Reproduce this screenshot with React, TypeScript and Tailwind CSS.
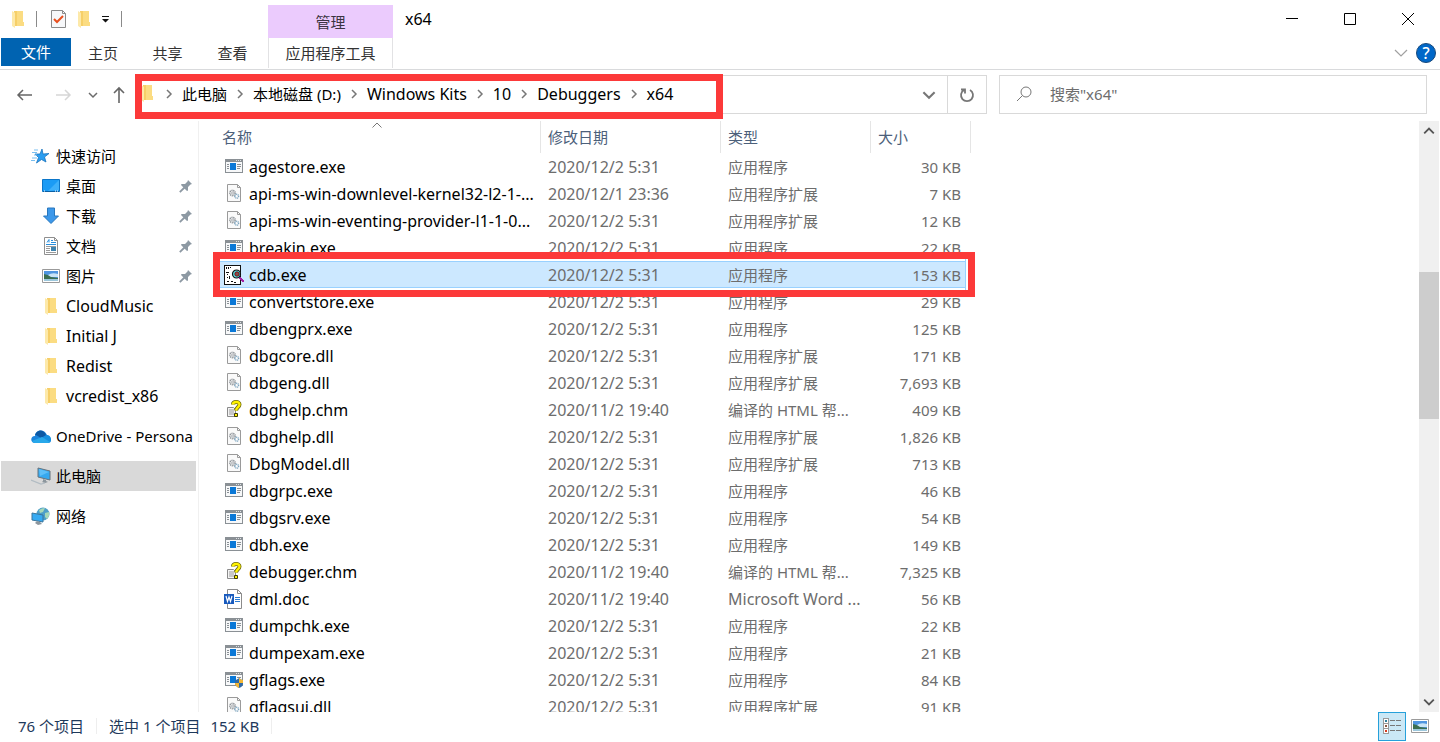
import type { ReactNode } from "react";

type FileKind = "exe" | "dll" | "chm" | "doc" | "cdb" | "shield";
type FileRow = { name: string; date: string; type: string; size: string; kind: FileKind };

const EXE = "应用程序";
const DLL = "应用程序扩展";
const CHM = "编译的 HTML 帮...";
const D2 = "2020/12/2 5:31";
const NOV = "2020/11/2 19:40";

const files: FileRow[] = [
  { name: "agestore.exe", date: D2, type: EXE, size: "30 KB", kind: "exe" },
  { name: "api-ms-win-downlevel-kernel32-l2-1-...", date: "2020/12/1 23:36", type: DLL, size: "7 KB", kind: "dll" },
  { name: "api-ms-win-eventing-provider-l1-1-0...", date: D2, type: DLL, size: "12 KB", kind: "dll" },
  { name: "breakin.exe", date: D2, type: EXE, size: "22 KB", kind: "exe" },
  { name: "cdb.exe", date: D2, type: EXE, size: "153 KB", kind: "cdb" },
  { name: "convertstore.exe", date: D2, type: EXE, size: "29 KB", kind: "exe" },
  { name: "dbengprx.exe", date: D2, type: EXE, size: "125 KB", kind: "exe" },
  { name: "dbgcore.dll", date: D2, type: DLL, size: "171 KB", kind: "dll" },
  { name: "dbgeng.dll", date: D2, type: DLL, size: "7,693 KB", kind: "dll" },
  { name: "dbghelp.chm", date: NOV, type: CHM, size: "409 KB", kind: "chm" },
  { name: "dbghelp.dll", date: D2, type: DLL, size: "1,826 KB", kind: "dll" },
  { name: "DbgModel.dll", date: D2, type: DLL, size: "713 KB", kind: "dll" },
  { name: "dbgrpc.exe", date: D2, type: EXE, size: "46 KB", kind: "exe" },
  { name: "dbgsrv.exe", date: D2, type: EXE, size: "54 KB", kind: "exe" },
  { name: "dbh.exe", date: D2, type: EXE, size: "149 KB", kind: "exe" },
  { name: "debugger.chm", date: NOV, type: CHM, size: "7,325 KB", kind: "chm" },
  { name: "dml.doc", date: NOV, type: "Microsoft Word ...", size: "56 KB", kind: "doc" },
  { name: "dumpchk.exe", date: D2, type: EXE, size: "22 KB", kind: "exe" },
  { name: "dumpexam.exe", date: D2, type: EXE, size: "21 KB", kind: "exe" },
  { name: "gflags.exe", date: D2, type: EXE, size: "84 KB", kind: "shield" },
  { name: "gflagsui.dll", date: D2, type: DLL, size: "91 KB", kind: "dll" },
];

function Folder() {
  return (
    <svg width="12" height="17" viewBox="0 0 12 17" aria-hidden="true">
      <path d="M2 0h9v11h1v4H3z" fill="#f6cf68" />
      <path d="M5 0h6v11h1v4H5z" fill="#fbdc82" />
      <path d="M0 0l3 2v15l-3-2z" fill="#fde9a9" />
    </svg>
  );
}

function ExeIcon({ shield = false }: { shield?: boolean }) {
  return (
    <svg width="20" height="20" viewBox="0 1 20 20" shapeRendering="crispEdges" aria-hidden="true">
      <path d="M1 3h18v14H1z" fill="#8a9095" />
      <path d="M2 6h16v10H2z" fill="#f7f8f9" />
      <path d="M12 4h1v1h-1zM14 4h1v1h-1zM16 4h1v1h-1z" fill="#dfe2e4" />
      <path d="M6 7h6v7H6z" fill="#0a78d7" />
      <path d="M3 8h2v1H3zM3 10h2v1H3zM3 12h2v1H3zM13 8h4v1h-4zM13 10h4v1h-4zM13 12h3v1h-3z" fill="#8a9095" />
      {shield && (
        <g shapeRendering="auto">
          <path d="M11 11q3 0 4-2 2 2 4 2v3q0 4-4 5-4-2-4-5z" fill="#2f6aa8" />
          <path d="M15 9q2 2 4 2v3h-4zM11 14h4v5q-4-2-4-5z" fill="#f3b735" />
        </g>
      )}
    </svg>
  );
}

function DllIcon() {
  return (
    <svg width="20" height="20" viewBox="0 0 20 20" fill="none" aria-hidden="true">
      <path d="M3.500.5h10l3 3v14h-13z" fill="#fafafa" stroke="#9a9a9a" />
      <path d="M13.500.5v3h3" stroke="#9a9a9a" />
      <circle cx="8.500" cy="9" r="2.600" stroke="#8e9499" strokeWidth="1.600" strokeDasharray="1.200 .6" />
      <circle cx="8.500" cy="9" r="1" stroke="#8e9499" strokeWidth=".7" />
      <circle cx="12.700" cy="12.200" r="1.900" stroke="#7fa6c0" strokeWidth="1.400" strokeDasharray="1 .5" />
    </svg>
  );
}

function ChmIcon() {
  return (
    <svg width="20" height="20" viewBox="0 0 20 20" aria-hidden="true">
      <path d="M3.500 7.500h6l2 2v7h-8z" fill="#f4f4f4" stroke="#8a8a8a" />
      <path d="M5 10h5M5 12h5M5 14h5" stroke="#9a9a9a" />
      <path d="M9 4.500c0-3 6.500-3.500 6.500 0 0 2.500-3 2.500-3.500 6" fill="none" stroke="#6e6a12" strokeWidth="4" />
      <path d="M9 4.500c0-3 6.500-3.500 6.500 0 0 2.500-3 2.500-3.500 6" fill="none" stroke="#fff200" strokeWidth="2.400" />
      <path d="M10.500 13.500h3v3h-3z" fill="#fff200" stroke="#3d3a08" />
    </svg>
  );
}

function DocIcon() {
  return (
    <svg width="20" height="20" viewBox="0 0 20 20" fill="none" aria-hidden="true">
      <path d="M3.500 5V.5h10l4 4v15h-14V15" fill="#fff" stroke="#8b8b8b" />
      <path d="M13.500.5v4h4" stroke="#8b8b8b" />
      <path d="M11 8.500h5M11 10.500h5M11 12.500h5" stroke="#2b7cd3" />
      <path d="M0 5h10v10H0z" fill="#185abd" />
      <path d="M2 7l1.500 5.500L5 8l1.500 4.500L8 7" stroke="#fff" strokeWidth="1.200" />
    </svg>
  );
}

function CdbIcon() {
  return (
    <svg width="20" height="20" viewBox="0 0 20 20" aria-hidden="true">
      <g shapeRendering="crispEdges">
        <path d="M0 0h17v20H0z" fill="#111" />
        <path d="M1 1h15v18H1z" fill="#fff" />
        <path d="M2 2h1v2H2zM4 2h1v2H4zM6 2h1v1H6zM2 7h3v1H2zM3 9h1v1H3zM3 12h1v1H3zM5 11h1v3H5zM3 16h2v1H3zM7 16h2v1H7zM10 17h2v1h-2z" fill="#111" />
        <path d="M15 12h2v1h1v1h1v1h1v2h-2v-1h-1v-1h-1v-1h-1z" fill="#a520a5" />
      </g>
      <circle cx="12.500" cy="9" r="4" fill="#63d7dc" stroke="#111" strokeWidth="1.200" />
      <circle cx="13" cy="9" r="2.200" fill="#e32b2b" stroke="#222" strokeWidth=".8" />
      <path d="M12.500 8h1v2h-1z" fill="#1b7c74" />
    </svg>
  );
}

function FileIcon({ kind }: { kind: FileKind }) {
  if (kind === "exe") return <ExeIcon />;
  if (kind === "shield") return <ExeIcon shield />;
  if (kind === "dll") return <DllIcon />;
  if (kind === "chm") return <ChmIcon />;
  if (kind === "doc") return <DocIcon />;
  return <CdbIcon />;
}

function Landscape() {
  return (
    <svg width="18" height="14" viewBox="0 0 18 14" aria-hidden="true">
      <path d="M.5.5h17v13H.5z" fill="#fff" stroke="#9a9a9a" />
      <path d="M2 2h14v10H2z" fill="#4f95e0" />
      <path d="M6 6q4-3 10-1v3H6z" fill="#c9e4f7" />
      <path d="M2 5q5 1 7 3l7 1v1H2z" fill="#3c6e50" />
      <path d="M2 10h14v2H2z" fill="#9cc7dc" />
    </svg>
  );
}

function StarIcon() {
  return (
    <svg width="20" height="18" viewBox="0 0 20 18" aria-hidden="true">
      <path d="M11 2l1 5 6-.5-4.500 3.500 1.500 5-4.500-2.500L5.500 16l2-5.500L4 7l5 0z" fill="#2a9df0" stroke="#1a74bd" strokeWidth=".8" />
      <path d="M3 3h4M1 5.500h5M3 8h3M1 11h5M0 13.500h4" stroke="#78bff0" />
    </svg>
  );
}

function DesktopIcon() {
  return (
    <svg width="18" height="14" viewBox="0 0 18 14" aria-hidden="true">
      <path d="M.5.5h17v12H.5z" fill="#1b9bf5" stroke="#0b76c9" />
      <path d="M17 1v10L6 12z" fill="#3eb0fa" />
      <path d="M1 12.500h16" stroke="#0960a5" />
      <path d="M2 12h1M13 12h1M15 12h1" stroke="#fff" />
    </svg>
  );
}

function DownloadIcon() {
  return (
    <svg width="18" height="18" viewBox="0 0 18 18" aria-hidden="true">
      <path d="M5.500 1h7v8h4L9 16.500 1.500 9h4z" fill="#3c98ea" stroke="#2877bd" />
    </svg>
  );
}

function DocumentsIcon() {
  return (
    <svg width="16" height="18" viewBox="0 0 16 18" fill="none" aria-hidden="true">
      <path d="M1.500.5h10l3 3v14h-13z" fill="#fff" stroke="#8f8f8f" />
      <path d="M11.500.5v3h3" stroke="#8f8f8f" />
      <path d="M4 5.500l2-3v3M8 3.500h2M3 7.500h10M8 5.500h5" stroke="#2a8fdd" />
      <path d="M3 9.500h10M3 11.500h4M3 13.500h4M3 15.500h10" stroke="#9a9a9a" />
      <path d="M8 10h5v4H8z" fill="#3f83ae" />
    </svg>
  );
}

function OneDriveIcon() {
  return (
    <svg width="20" height="13" viewBox="0 0 20 13" aria-hidden="true">
      <path d="M4 6c0-6 9-8 12-1 3 1 4 3 4 5s-1 3-3 3H4c-5 0-5-7 0-7z" fill="#1b84dc" />
      <path d="M4 5C6-1 13-1 15 5l-5 3-5-3z" fill="#0c59a4" />
      <path d="M11 8l5-3c3 0 4 3 4 5l-1 2z" fill="#1490df" />
      <path d="M1 11l10-4 8 5q-1 1-2 1H4q-2 0-3-2z" fill="#28a8ea" />
    </svg>
  );
}

function PcIcon() {
  return (
    <svg width="20" height="18" viewBox="0 0 20 18" aria-hidden="true">
      <path d="M7 1l12 3v9L7 10z" fill="#35a8ef" stroke="#66737d" />
      <path d="M8 2l10 3-9 4z" fill="#5dbff8" />
      <path d="M12 12l3 1v1l2 1-3 1-3-1 1-1z" fill="#8c969d" />
      <path d="M0 13l10 4 4-1" fill="none" stroke="#b2bcc3" strokeWidth="1.200" />
    </svg>
  );
}

function NetworkIcon() {
  return (
    <svg width="20" height="18" viewBox="0 0 20 18" aria-hidden="true">
      <circle cx="12" cy="7" r="6.500" fill="#4d9fc9" />
      <path d="M8 3q3-2 6-2l-2 4-3 1zM14 6l4-1q1 4-2 7l-2-2z" fill="#a7d8b8" />
      <path d="M1 6l11 2v7L1 13z" fill="#36aaf2" stroke="#39759c" />
      <path d="M6 14l3 1 2 2-4 1-3-2z" fill="#8c969d" />
    </svg>
  );
}

function Pin() {
  return (
    <svg width="13" height="13" viewBox="0 0 13 13" aria-hidden="true">
      <path d="M9 0l4 4-1.500.5L9 7l0 3.500-1 .5-6-6 .5-1L6 4l2.500-2.500z" fill="#8d99a3" />
      <path d="M5.500 7.500L.8 12.200" stroke="#8d99a3" strokeWidth="1.800" />
    </svg>
  );
}

function Chevron({ dir, size = 10, className = "" }: { dir: "up" | "down" | "right"; size?: number; className?: string }) {
  const d = dir === "up" ? "M1 7l4-4 4 4" : dir === "down" ? "M1 3l4 4 4-4" : "M3 1l4 4-4 4";
  return (
    <svg width={size} height={size} viewBox="0 0 10 10" fill="none" stroke="currentColor" className={className} aria-hidden="true">
      <path d={d} strokeWidth="1.500" />
    </svg>
  );
}

function NavItem({ icon, label, level = 0, pinned = false, active = false, large = false }: { icon: ReactNode; label: string; level?: number; pinned?: boolean; active?: boolean; large?: boolean }) {
  return (
    <a
      href="#"
      className={`ml-px mr-0.5 flex h-[30px] items-center whitespace-nowrap ${active ? "bg-[#d9d9d9]" : ""} ${level ? "pl-10" : "pl-[30px]"} ${large ? "text-base" : ""}`}
    >
      <span className="flex w-5 shrink-0 items-center justify-center">{icon}</span>
      <span className="ml-[5px]">{label}</span>
      {pinned && <span className="ml-auto mr-1"><Pin /></span>}
    </a>
  );
}

const crumbs = [
  { label: "此电脑" },
  { label: "本地磁盘 (D:)" },
  { label: "Windows Kits", large: true },
  { label: "10", large: true },
  { label: "Debuggers", large: true },
  { label: "x64", large: true },
];

export default function App() {
  return (
    <div className="flex h-screen flex-col overflow-hidden bg-white font-['Noto_Sans','Noto_Sans_CJK_SC',sans-serif] text-[15px] leading-5 text-black">
      <header className="flex shrink-0 flex-col border-b border-[#d9dadc]">
        <div className="flex h-[38px] items-stretch">
          <div className="flex w-[268px] items-center gap-3 pl-3 text-[#8a8a8a]">
            <Folder />
            <span className="h-4 w-px bg-[#8a8a8a]" />
            <span className="flex items-center gap-3">
              <button aria-label="属性" className="ml-0.5">
                <svg width="15" height="18" viewBox="0 0 15 18" fill="none" aria-hidden="true">
                  <path d="M.5.5h11l3 3v14H.5z" fill="#f7f8fa" stroke="#8b8b8b" />
                  <path d="M11.500.5v3h3" stroke="#8b8b8b" />
                  <path d="M3 9l3 3 6-6" stroke="#e8501f" strokeWidth="2" />
                </svg>
              </button>
              <Folder />
            </span>
            <button aria-label="自定义快速访问工具栏">
              <svg width="7" height="7" viewBox="0 0 7 7" aria-hidden="true">
                <path d="M0 0h7v1H0zM0 3h7L3.500 6.500z" fill="#111" />
              </svg>
            </button>
            <span className="h-4 w-px bg-[#8a8a8a]" />
          </div>
          <div className="mt-[5px] flex w-[125px] items-center justify-center bg-[#ebcbfd] text-[#3b3442]">管理</div>
          <h1 className="ml-3 self-center text-base">x64</h1>
          <div className="ml-auto mr-[3px] flex items-center">
            <button aria-label="最小化" className="flex h-full w-[58px] items-center justify-center">
              <svg width="12" height="12" aria-hidden="true"><path d="M0 5.500h12" stroke="#000" /></svg>
            </button>
            <button aria-label="最大化" className="flex h-full w-[58px] items-center justify-center">
              <svg width="12" height="12" aria-hidden="true"><path d="M.5.5h11v11H.5z" fill="none" stroke="#000" /></svg>
            </button>
            <button aria-label="关闭" className="flex h-full w-[58px] items-center justify-center">
              <svg width="12" height="12" aria-hidden="true"><path d="M0 0l12 12M12 0L0 12" stroke="#000" /></svg>
            </button>
          </div>
        </div>
        <nav className="flex h-[31px] items-start pl-px text-[#333]">
          <button className="h-7 w-[70px] bg-[#0063b1] text-white">文件</button>
          <button className="h-[30px] w-16">主页</button>
          <button className="h-[30px] w-[65px]">共享</button>
          <button className="h-[30px] w-[65px]">查看</button>
          <button className="ml-[3px] h-[30px] w-[125px] border-x border-[#e2e2e4]">应用程序工具</button>
          <div className="ml-auto mr-1 flex h-[30px] items-center gap-2">
            <button aria-label="展开功能区" className="text-[#a0a0a0]">
              <svg width="14" height="8" viewBox="0 0 14 8" fill="none" aria-hidden="true"><path d="M1 1l6 6 6-6" stroke="currentColor" strokeWidth="1.200" /></svg>
            </button>
            <button aria-label="帮助" className="flex h-5 w-5 items-center justify-center rounded-full border border-[#17497c] bg-[#0067c8] text-base font-medium text-white">?</button>
          </div>
        </nav>
      </header>

      <div className="flex h-[51px] shrink-0 items-start pr-[13px] pt-[5px]">
        <div className="flex h-[39px] w-[135px] items-center text-[#6b6b6b]">
          <button aria-label="后退" className="ml-4">
            <svg width="17" height="14" viewBox="0 0 17 14" fill="none" stroke="#666" strokeWidth="1.500" aria-hidden="true"><path d="M16 7H2M7 2L2 7l5 5" /></svg>
          </button>
          <button aria-label="前进" className="ml-[22px]" disabled>
            <svg width="17" height="14" viewBox="0 0 17 14" fill="none" stroke="#d6d6d6" strokeWidth="1.500" aria-hidden="true"><path d="M1 7h14M10 2l5 5-5 5" /></svg>
          </button>
          <button aria-label="最近浏览的位置" className="ml-4"><Chevron dir="down" /></button>
          <button aria-label="向上" className="ml-3.5">
            <svg width="14" height="17" viewBox="0 0 14 17" fill="none" stroke="#666" strokeWidth="1.600" aria-hidden="true"><path d="M7 17V2M2 7l5-5 5 5" /></svg>
          </button>
        </div>
        <div className="relative flex h-[39px] flex-1 items-center border border-[#d9d9d9]">
          <nav aria-label="地址" className="flex h-full w-[584px] items-center whitespace-nowrap pb-0.5 pl-[5px]">
            <span className="mr-[3px]"><Folder /></span>
            {crumbs.map((c) => (
              <span key={c.label} className="flex items-center">
                <Chevron dir="right" size={10} className="mx-2 text-[#777]" />
                <a href="#" className={c.large ? "text-base leading-5" : ""}>{c.label}</a>
              </span>
            ))}
          </nav>
          <button aria-label="历史记录" className="ml-auto mr-[11px] text-[#777]"><Chevron dir="down" size={14} /></button>
          <button aria-label="刷新" className="flex h-full w-[39px] items-center justify-center border-l border-[#d9d9d9]">
            <svg width="16" height="16" viewBox="0 0 16 16" fill="none" stroke="#777" strokeWidth="1.800" aria-hidden="true">
              <path d="M11 3a6 6 0 1 1-6 0M2 2.500h4v4" />
            </svg>
          </button>
          <div className="pointer-events-none absolute -left-px -top-0.5 h-[45px] w-[588px] border-[7px] border-[#fc3939]" />
        </div>
        <label className="ml-3 flex h-[39px] w-[428px] items-center border border-[#d9d9d9] pb-0.5 pl-4">
          <svg width="16" height="16" viewBox="0 0 16 16" fill="none" stroke="#777" aria-hidden="true"><circle cx="10" cy="6" r="5" /><path d="M6.500 9.500L1 15" /></svg>
          <input aria-label="搜索" placeholder={'搜索"x64"'} className="ml-[18px] min-w-0 flex-1 outline-none placeholder:text-[#6d6d6d] placeholder:opacity-100" />
        </label>
      </div>

      <div className="flex min-h-0 flex-1">
        <aside className="flex w-[199px] shrink-0 flex-col border-r border-[#f0f0f0] pt-5">
          <NavItem icon={<StarIcon />} label="快速访问" />
          <NavItem level={1} pinned icon={<DesktopIcon />} label="桌面" />
          <NavItem level={1} pinned icon={<DownloadIcon />} label="下载" />
          <NavItem level={1} pinned icon={<DocumentsIcon />} label="文档" />
          <NavItem level={1} pinned icon={<Landscape />} label="图片" />
          <NavItem level={1} large icon={<Folder />} label="CloudMusic" />
          <NavItem level={1} large icon={<Folder />} label="Initial J" />
          <NavItem level={1} large icon={<Folder />} label="Redist" />
          <NavItem level={1} large icon={<Folder />} label="vcredist_x86" />
          <div className="mt-2.5 flex flex-col gap-2.5">
            <NavItem icon={<OneDriveIcon />} label="OneDrive - Persona" />
            <NavItem active icon={<PcIcon />} label="此电脑" />
            <NavItem icon={<NetworkIcon />} label="网络" />
          </div>
        </aside>

        <main className="min-w-0 flex-1 overflow-hidden pl-5">
          <table className="w-[752px] table-fixed border-separate border-spacing-0">
            <colgroup>
              <col className="w-[322px]" />
              <col className="w-[180px]" />
              <col className="w-[150px]" />
              <col className="w-[100px]" />
            </colgroup>
            <thead className="text-left text-[#4c607a]">
              <tr className="h-8">
                <th className="relative border-r border-[#e5e5e5] p-0 pl-[3px] font-normal">
                  <svg width="10" height="6" viewBox="0 0 10 6" fill="none" className="absolute left-[153px] top-px" aria-hidden="true">
                    <path d="M.5 5.500L5 1l4.500 4.500" stroke="#777" />
                  </svg>
                  名称
                </th>
                <th className="border-r border-[#e5e5e5] p-0 pl-[7px] font-normal">修改日期</th>
                <th className="border-r border-[#e5e5e5] p-0 pl-[7px] font-normal">类型</th>
                <th className="border-r border-[#e5e5e5] p-0 pl-[7px] font-normal">大小</th>
              </tr>
            </thead>
            <tbody className="whitespace-nowrap text-[#6d6d6d]">
              {files.map((f) => {
                const sel = f.kind === "cdb";
                const edge = sel ? "border-y border-[#99d1ff]" : "";
                return (
                  <tr key={f.name} className={`h-[27px] ${sel ? "relative bg-[#cce8ff]" : ""}`}>
                    <td className={`p-0 pl-[5px] text-base leading-5 text-black ${edge}`}>
                      <span className="flex items-center gap-[5px]">
                        <FileIcon kind={f.kind} />
                        {f.name}
                      </span>
                    </td>
                    <td className={`p-0 pl-[7px] text-base leading-5 ${edge}`}>{f.date}</td>
                    <td className={`p-0 pl-[7px] ${f.kind === "doc" ? "text-base leading-5" : ""} ${edge}`}>{f.type}</td>
                    <td className={`p-0 pr-2.5 text-right ${edge}`}>
                      {f.size}
                      {sel && (
                        <span className="pointer-events-none absolute -left-1.5 -top-[9px] h-[45px] w-[762px] border-[7px] border-[#fc3939] shadow-[inset_-2px_0_#fff,inset_-3px_0_#99d1ff]" />
                      )}
                    </td>
                  </tr>
                );
              })}
            </tbody>
          </table>
        </main>

        <div className="mr-px flex w-5 shrink-0 flex-col items-center bg-[#f0f0f0] py-1 text-[#555]">
          <Chevron dir="up" size={12} />
          <div className="mt-[135px] h-[147px] w-full bg-[#cdcdcd]" />
          <Chevron dir="down" size={12} className="mt-auto" />
        </div>
      </div>

      <footer className="flex h-[30px] shrink-0 items-center pb-0.5 pl-[18px] pr-[11px] text-[#1e395b]">
        <span>76 个项目</span>
        <span className="mx-3 h-4 w-px bg-[#eee]" />
        <span>选中 1 个项目</span>
        <span className="ml-2.5">152 KB</span>
        <span className="ml-3 h-4 w-px bg-[#eee]" />
        <button aria-label="详细信息" className="ml-auto flex h-[29px] w-7 items-center justify-center border border-[#26a0da] bg-[#cbe8f6]">
          <svg width="18" height="16" viewBox="0 0 18 16" shapeRendering="crispEdges" aria-hidden="true">
            <path d="M0 0h6v16H0z" fill="#999" />
            <path d="M1 1h4v4H1zM1 6h4v4H1zM1 11h4v4H1z" fill="#fff" />
            <path d="M2 2h2v2H2z" fill="#2d7d9a" /><path d="M2 7h2v2H2z" fill="#8a5a44" /><path d="M2 12h2v2H2z" fill="#d83b1f" />
            <path d="M7 2h5v1H7zM13 2h5v1h-5zM7 7h5v1H7zM13 7h5v1h-5zM7 12h5v1H7zM13 12h5v1h-5z" fill="#777" />
          </svg>
        </button>
        <button aria-label="大图标" className="ml-[5px]"><Landscape /></button>
      </footer>
    </div>
  );
}
